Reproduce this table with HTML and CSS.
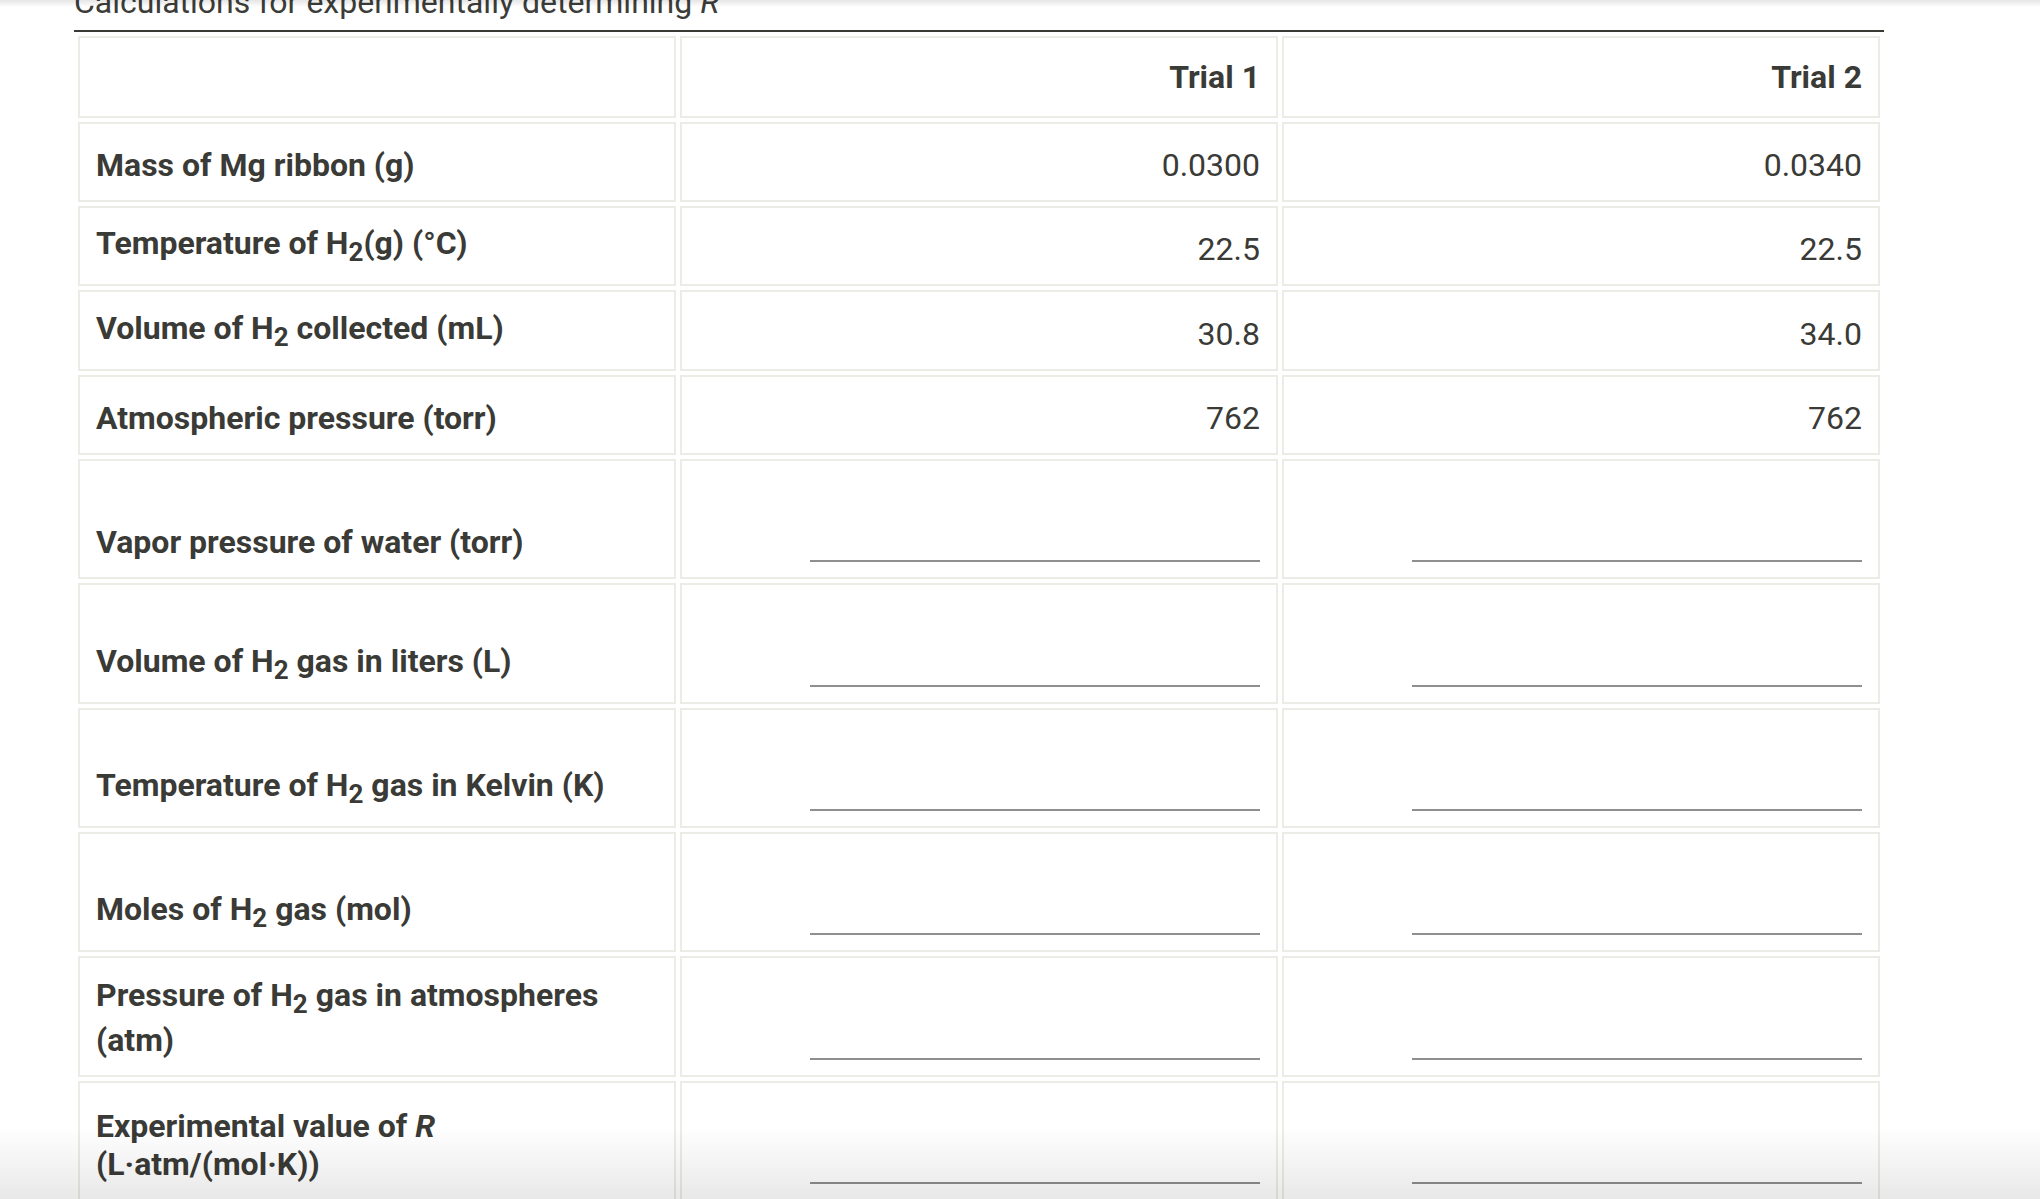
FILE: index.html
```html
<!DOCTYPE html>
<html lang="en">
<head>
<meta charset="utf-8">
<title>Calculations for experimentally determining R</title>
<link rel="stylesheet" href="styles.css">
</head>
<body>
<div class="top-shade"></div>
<main class="page">
  <h2 class="title">Calculations for experimentally determining <i>R</i></h2>
  <table class="data">
    <thead>
      <tr class="row-head">
        <th class="label"></th>
        <th>Trial 1</th>
        <th>Trial 2</th>
      </tr>
    </thead>
    <tbody>
      <tr class="row-short">
        <td class="label">Mass of Mg ribbon (g)</td>
        <td>0.0300</td>
        <td>0.0340</td>
      </tr>
      <tr class="row-short">
        <td class="label">Temperature of H<sub>2</sub>(g) (°C)</td>
        <td>22.5</td>
        <td>22.5</td>
      </tr>
      <tr class="row-short">
        <td class="label">Volume of H<sub>2</sub> collected (mL)</td>
        <td>30.8</td>
        <td>34.0</td>
      </tr>
      <tr class="row-short">
        <td class="label">Atmospheric pressure (torr)</td>
        <td>762</td>
        <td>762</td>
      </tr>
      <tr class="row-tall">
        <td class="label">Vapor pressure of water (torr)</td>
        <td><input class="blank" type="text" aria-label="Vapor pressure of water, trial 1"></td>
        <td><input class="blank" type="text" aria-label="Vapor pressure of water, trial 2"></td>
      </tr>
      <tr class="row-tall">
        <td class="label">Volume of H<sub>2</sub> gas in liters (L)</td>
        <td><input class="blank" type="text" aria-label="Volume in liters, trial 1"></td>
        <td><input class="blank" type="text" aria-label="Volume in liters, trial 2"></td>
      </tr>
      <tr class="row-tall">
        <td class="label">Temperature of H<sub>2</sub> gas in Kelvin (K)</td>
        <td><input class="blank" type="text" aria-label="Temperature in Kelvin, trial 1"></td>
        <td><input class="blank" type="text" aria-label="Temperature in Kelvin, trial 2"></td>
      </tr>
      <tr class="row-tall">
        <td class="label">Moles of H<sub>2</sub> gas (mol)</td>
        <td><input class="blank" type="text" aria-label="Moles, trial 1"></td>
        <td><input class="blank" type="text" aria-label="Moles, trial 2"></td>
      </tr>
      <tr class="row-tall">
        <td class="label">Pressure of H<sub>2</sub> gas in atmospheres (atm)</td>
        <td><input class="blank" type="text" aria-label="Pressure in atm, trial 1"></td>
        <td><input class="blank" type="text" aria-label="Pressure in atm, trial 2"></td>
      </tr>
      <tr class="row-tall">
        <td class="label">Experimental value of <i>R</i> (L·atm/(mol·K))</td>
        <td><input class="blank" type="text" aria-label="R, trial 1"></td>
        <td><input class="blank" type="text" aria-label="R, trial 2"></td>
      </tr>
    </tbody>
  </table>
</main>
<div class="bottom-shade"></div>
</body>
</html>
```

FILE: styles.css
```css
html, body {
  margin: 0;
  padding: 0;
  background: #ffffff;
}

body {
  font-family: Roboto, "Liberation Sans", Arial, sans-serif;
  color: #3a3a36;
  overflow: hidden;
}

.page {
  width: 1810px;
  margin: -20px 0 0 74px;
}

.title {
  margin: 0;
  font-size: 32px;
  font-weight: 400;
  line-height: 44px;
  padding-bottom: 6px;
  border-bottom: 2px solid #3a3a35;
  color: #3c3c38;
}

.data {
  width: 1810px;
  table-layout: fixed;
  border-collapse: separate;
  border-spacing: 4.5px;
  margin: 0;
  font-size: 32px;
  line-height: 1.2;
}

.data th,
.data td {
  border: 2px solid #ecece6;
  padding: 16px 16px 15.5px;
  text-align: right;
  vertical-align: bottom;
  font-weight: 400;
}

.data th {
  font-weight: 700;
  vertical-align: middle;
  padding-bottom: 16px;
}

.data .label {
  text-align: left;
  font-weight: 700;
}

.row-head { height: 81.5px; }
.row-short { height: 80.4px; }
.row-tall { height: 120.3px; }

sub {
  font-size: 26px;
  vertical-align: sub;
}

.blank {
  display: block;
  width: 450px;
  height: 40px;
  margin: 0 0 -0.5px auto;
  padding: 0;
  border: 0;
  border-bottom: 2px solid #8f8f8f;
  background: transparent;
  box-sizing: border-box;
  font: inherit;
}

.top-shade {
  position: fixed;
  top: 0;
  left: 0;
  right: 0;
  height: 7px;
  background: linear-gradient(to bottom, rgba(0, 0, 0, 0.1), rgba(0, 0, 0, 0));
  pointer-events: none;
  z-index: 2;
}

.bottom-shade {
  position: fixed;
  left: 0;
  right: 0;
  bottom: 0;
  height: 72px;
  background: linear-gradient(to bottom, rgba(0, 0, 0, 0), rgba(0, 0, 0, 0.09));
  pointer-events: none;
  z-index: 2;
}
```
